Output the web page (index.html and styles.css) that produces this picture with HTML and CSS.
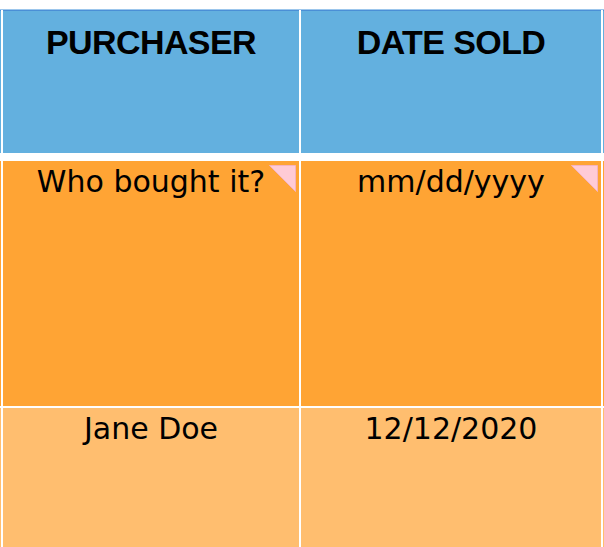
FILE: index.html
```html
<!DOCTYPE html>
<html>
<head>
<meta charset="utf-8">
<link rel="stylesheet" href="styles.css">
</head>
<body>
<div class="sheet">
  <div class="row head">
    <div class="cell edge"></div>
    <div class="cell"><span class="title">PURCHASER</span></div>
    <div class="cell"><span class="title">DATE SOLD</span></div>
    <div class="cell edge"></div>
  </div>
  <div class="row hint">
    <div class="cell edge"></div>
    <div class="cell">Who bought it?<svg class="flag" viewBox="0 0 27 27"><polygon points="0.5,0.5 26.5,0.5 26.5,26.5"/></svg></div>
    <div class="cell">mm/dd/yyyy<svg class="flag" viewBox="0 0 27 27"><polygon points="0.5,0.5 26.5,0.5 26.5,26.5"/></svg></div>
    <div class="cell edge"></div>
  </div>
  <div class="row data">
    <div class="cell edge"></div>
    <div class="cell">Jane Doe</div>
    <div class="cell">12/12/2020</div>
    <div class="cell edge"></div>
  </div>
</div>
</body>
</html>
```
FILE: styles.css
```css
html, body {
  margin: 0;
  padding: 0;
  background: #ffffff;
  overflow: hidden;
}
.sheet {
  padding-top: 9px;
  width: 604px;
}
.row {
  display: grid;
  grid-template-columns: 1px 296px 300px 1px;
  column-gap: 2px;
}
.cell {
  position: relative;
  text-align: center;
  font-family: "DejaVu Sans", Verdana, sans-serif;
  font-size: 30px;
  color: #000;
  padding-top: 3px;
  box-sizing: border-box;
}
.edge {
  padding: 0;
}
.head {
  border-top: 1px solid #9cc6ec;
}
.head .cell {
  background: #63b0df;
  height: 143px;
  border-top: 1px solid #4a8fd6;
  padding-top: 13px;
  line-height: 36px;
}
.title {
  font-family: "Liberation Sans", Arial, sans-serif;
  font-weight: bold;
  font-size: 34px;
  letter-spacing: -0.6px;
}
.hint {
  margin-top: 8px;
}
.hint .cell {
  background: #ffa434;
  height: 245px;
}
.data {
  margin-top: 2px;
}
.data .cell {
  background: #ffbe6f;
  height: 150px;
}
.flag {
  position: absolute;
  top: 4px;
  right: 3px;
  width: 27px;
  height: 27px;
}
.flag polygon {
  fill: #ffcbd6;
  stroke: #f5b3bf;
  stroke-width: 1;
}
```
